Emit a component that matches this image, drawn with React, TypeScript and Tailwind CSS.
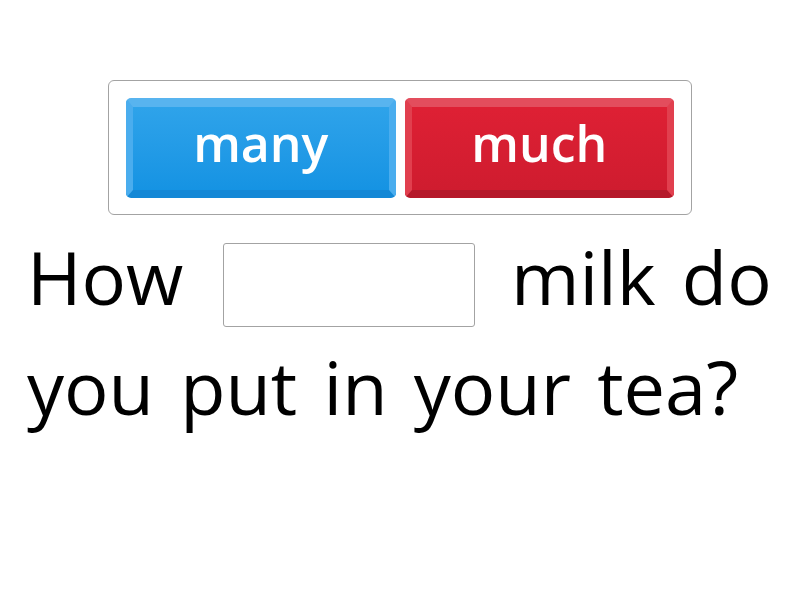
import React from "react";

export default function App() {
  return (
    <div className="w-[800px] h-[600px] bg-white overflow-hidden" style={{ fontFamily: '"Open Sans", sans-serif' }}>
      <div className="pt-[80px] flex justify-center">
        <div className="w-[584px] h-[135px] border border-[#a3a3a3] rounded-[6px] pt-[17px] px-[17px] pb-[16px] flex gap-[9px]">
          <div className="flex-1 rounded-[5px] border-t-[9px] border-b-[8px] border-x-[7px] border-t-[#58b4ef] border-x-[#4aadee] border-b-[#1488d6] bg-gradient-to-b from-[#2ea3ea] to-[#1593e3] flex items-center justify-center">
            <span className="text-white font-semibold text-[50px] leading-none pb-[12px]">many</span>
          </div>
          <div className="flex-1 rounded-[5px] border-t-[9px] border-b-[8px] border-x-[7px] border-t-[#e34d5d] border-x-[#e13f4e] border-b-[#b5192a] bg-gradient-to-b from-[#de2034] to-[#cf1c2f] flex items-center justify-center">
            <span className="text-white font-semibold text-[50px] leading-none pb-[12px]">much</span>
          </div>
        </div>
      </div>
      <div className="mt-[7px] pl-[27px] pr-[10px] text-[74px] leading-[110px] text-black [word-spacing:7px]">
        How{" "}
        <span className="inline-block align-middle w-[252px] h-[84px] border border-[#a3a3a3] rounded-[3px] ml-[13px] mr-[10px]"></span>{" "}
        milk do you put in your tea?
      </div>
    </div>
  );
}
